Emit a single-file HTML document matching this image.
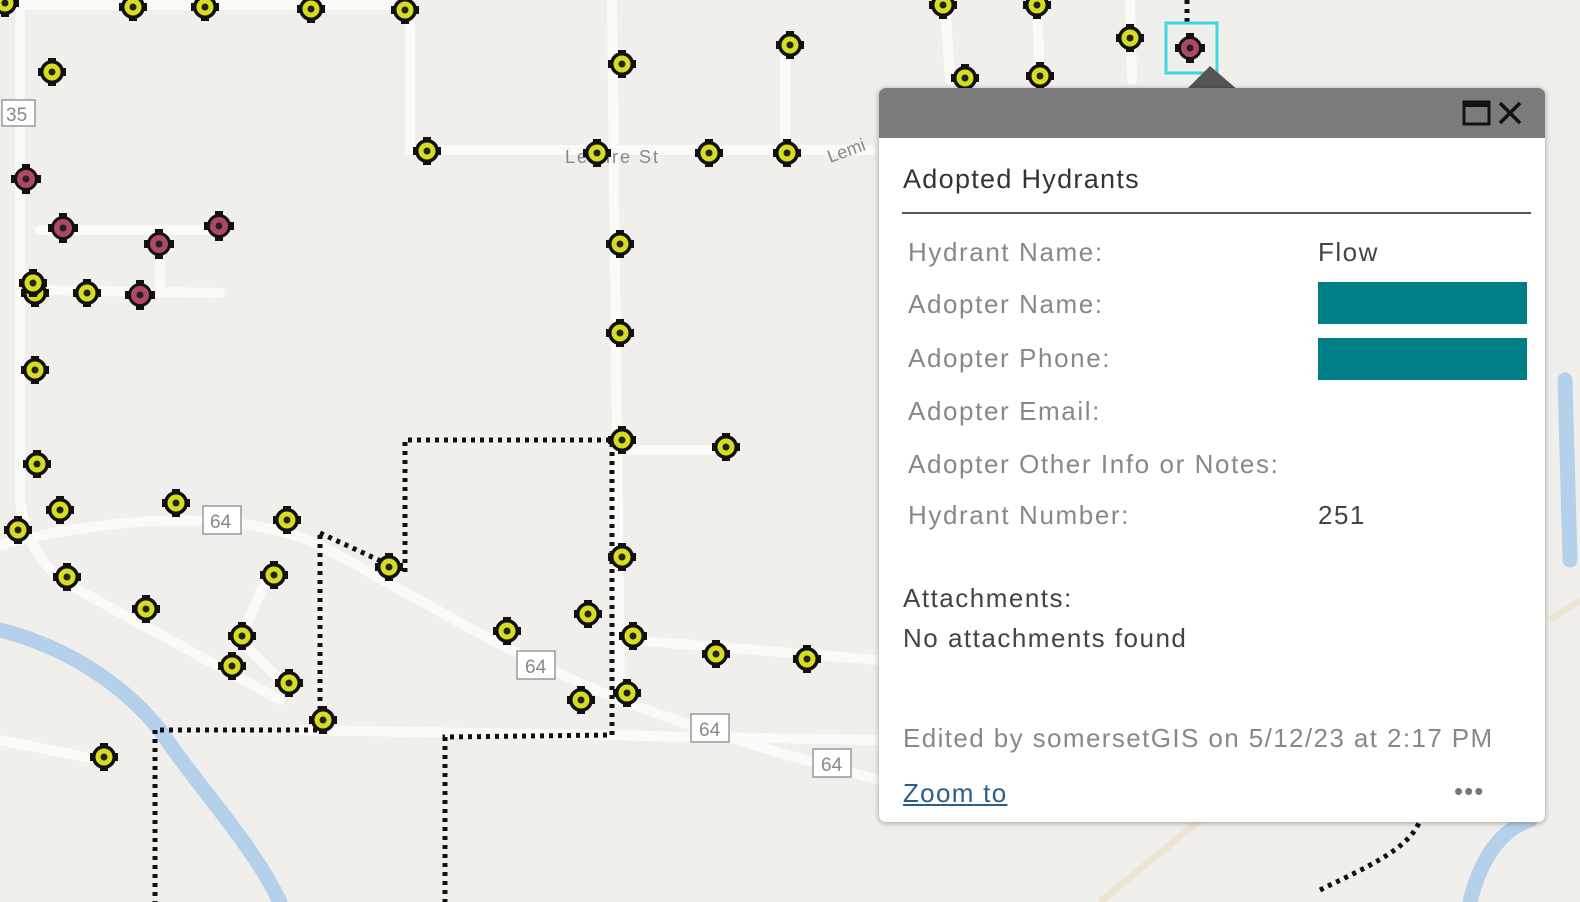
<!DOCTYPE html>
<html><head><meta charset="utf-8"><style>
body{margin:0;width:1580px;height:902px;overflow:hidden;background:#f1efeb;font-family:"Liberation Sans",sans-serif;position:relative}
svg.map{position:absolute;left:0;top:0}
.pop{position:absolute;left:879px;top:88px;width:666px;height:734px;background:#fff;border-radius:7px;box-shadow:0 1px 6px rgba(0,0,0,.35);overflow:hidden}
.hdr{height:50px;background:#7b7b7b}
.t{position:absolute;left:24px;top:76px;font-size:27px;color:#333;letter-spacing:1.3px}
.line{position:absolute;left:23px;right:14px;top:124px;height:2px;background:#555}
.r{position:absolute;left:29px;font-size:26px;color:#888;letter-spacing:1.6px}
.v{position:absolute;left:439px;font-size:26px;color:#444;letter-spacing:1.5px}
.bar{position:absolute;left:439px;width:209px;height:42px;background:#007e86}
.d{position:absolute;left:24px;font-size:26px;color:#444;letter-spacing:1.5px}
</style></head><body>
<svg class="map" width="1580" height="902" viewBox="0 0 1580 902">
<defs>
<g id="y"><circle r="12" fill="#111"/><rect x="-4" y="-14" width="8" height="28" fill="#111"/><rect x="-14" y="-4" width="28" height="8" fill="#111"/><circle r="8.5" fill="#d8dc20"/><circle r="3.5" fill="#222"/></g>
<g id="rd"><circle r="12" fill="#111"/><rect x="-4" y="-15" width="8" height="30" fill="#111"/><rect x="-15" y="-4" width="30" height="8" fill="#111"/><circle r="9" fill="#b04860"/><circle r="3.5" fill="#222"/></g>
</defs>
<g fill="none" stroke="#b5d0ea" stroke-width="15" stroke-linecap="round">
<path d="M0 630 C60 645 120 680 160 730 C200 790 250 840 280 902"/>
<path d="M1565 380 L1570 560"/>
<path d="M1470 902 C1480 860 1500 830 1530 820"/>
</g>
<g fill="none" stroke="#fafaf8" stroke-width="10" stroke-linecap="round">
<path d="M0 545 C100 520 230 505 320 545 C420 600 520 660 620 700 C700 730 800 760 880 780"/>
<path d="M20 0 L20 500 C25 540 40 560 60 580 L280 700"/>
<path d="M0 5 L410 5 L410 150 L870 150"/>
<path d="M612 0 L620 700"/>
<path d="M40 230 L220 230 M40 290 L220 293 M160 245 L160 290"/>
<path d="M620 450 L730 450 M630 640 L880 660 M270 570 L240 640 L290 690 M300 730 L880 740"/>
<path d="M945 0 L950 80 M1037 0 L1040 80 M1130 0 L1132 80 M785 60 L785 150"/>
<path d="M0 740 L100 760"/>
</g>
<g fill="none" stroke="#eee4d2" stroke-width="7"><path d="M1100 902 L1200 820 M1550 620 L1580 600"/></g>
<g fill="none" stroke="#111" stroke-width="5" stroke-dasharray="4 5">
<path d="M1187 0 L1187 25"/>
<path d="M405 572 L405 440 L612 440 L612 735 L445 737 L445 902"/>
<path d="M320 535 L320 730 L155 730 L155 902"/>
<path d="M320 533 L385 563"/>
<path d="M1320 890 C1360 870 1410 850 1420 820"/>
</g>
<g font-size="18" fill="#888" font-family="Liberation Sans">
<text x="565" y="163" letter-spacing="2">Lemire St</text>
<text x="830" y="163" transform="rotate(-20 830 163)">Lemi</text>
</g>
<g fill="#fff" stroke="#999" stroke-width="1.5" font-size="17" font-family="Liberation Sans">
<rect x="2" y="100" width="33" height="26"/><rect x="203" y="506" width="38" height="28"/><rect x="517" y="651" width="38" height="28"/><rect x="691" y="714" width="38" height="28"/><rect x="813" y="749" width="38" height="28"/>
</g>
<g fill="#888" font-size="19" font-family="Liberation Sans"><text x="6" y="121">35</text><text x="210" y="528">64</text><text x="525" y="673">64</text><text x="699" y="736">64</text><text x="821" y="771">64</text></g>
<g>
<use href="#y" x="133" y="7"/><use href="#y" x="205" y="7"/><use href="#y" x="311" y="9"/><use href="#y" x="405" y="10"/><use href="#y" x="52" y="72"/><use href="#y" x="622" y="64"/><use href="#y" x="790" y="45"/><use href="#y" x="943" y="5"/><use href="#y" x="1037" y="5"/><use href="#y" x="1130" y="38"/><use href="#y" x="965" y="78"/><use href="#y" x="1040" y="76"/><use href="#y" x="427" y="151"/><use href="#y" x="597" y="153"/><use href="#y" x="709" y="153"/><use href="#y" x="787" y="153"/><use href="#y" x="620" y="244"/><use href="#y" x="620" y="333"/><use href="#y" x="35" y="370"/><use href="#y" x="37" y="464"/><use href="#y" x="622" y="440"/><use href="#y" x="726" y="447"/><use href="#y" x="60" y="510"/><use href="#y" x="18" y="530"/><use href="#y" x="176" y="503"/><use href="#y" x="287" y="520"/><use href="#y" x="389" y="567"/><use href="#y" x="622" y="557"/><use href="#y" x="67" y="577"/><use href="#y" x="274" y="575"/><use href="#y" x="146" y="609"/><use href="#y" x="507" y="631"/><use href="#y" x="588" y="614"/><use href="#y" x="633" y="636"/><use href="#y" x="716" y="654"/><use href="#y" x="807" y="659"/><use href="#y" x="242" y="636"/><use href="#y" x="232" y="666"/><use href="#y" x="289" y="683"/><use href="#y" x="581" y="700"/><use href="#y" x="627" y="693"/><use href="#y" x="323" y="720"/><use href="#y" x="104" y="757"/><use href="#y" x="35" y="293"/><use href="#y" x="33" y="283"/><use href="#y" x="87" y="293"/><use href="#y" x="5" y="3"/>
<use href="#rd" x="26" y="179"/><use href="#rd" x="63" y="228"/><use href="#rd" x="159" y="244"/><use href="#rd" x="219" y="226"/><use href="#rd" x="140" y="295"/><use href="#rd" x="1190" y="48"/>
</g>
<rect x="1166" y="23" width="51" height="50" fill="none" stroke="#3ed6e0" stroke-width="3"/>
<polygon points="1186,90 1210,66 1238,90" fill="#555"/>
</svg>
<div class="pop">
<div class="hdr"></div>
<svg style="position:absolute;left:583px;top:12px" width="60" height="28"><rect x="2" y="2" width="25" height="22" fill="none" stroke="#111" stroke-width="3"/><rect x="2" y="2" width="25" height="5" fill="#111"/><path d="M38 3 L58 23 M58 3 L38 23" stroke="#111" stroke-width="3.5"/></svg>
<div class="t">Adopted Hydrants</div>
<div class="line"></div>
<div class="r" style="top:149px">Hydrant Name:</div><div class="v" style="top:149px">Flow</div>
<div class="r" style="top:201px">Adopter Name:</div><div class="bar" style="top:194px"></div>
<div class="r" style="top:255px">Adopter Phone:</div><div class="bar" style="top:250px"></div>
<div class="r" style="top:308px">Adopter Email:</div>
<div class="r" style="top:361px">Adopter Other Info or Notes:</div>
<div class="r" style="top:412px">Hydrant Number:</div><div class="v" style="top:412px">251</div>
<div class="d" style="top:495px">Attachments:</div>
<div class="d" style="top:535px">No attachments found</div>
<div class="r" style="left:24px;top:635px;letter-spacing:1.4px">Edited by somersetGIS on 5/12/23 at 2:17 PM</div>
<div style="position:absolute;left:24px;top:690px;font-size:26px;letter-spacing:1.3px;color:#2a5f8a;text-decoration:underline">Zoom to</div>
<div style="position:absolute;left:575px;top:688px;font-size:26px;color:#777;letter-spacing:1px">•••</div>
</div>
</body></html>
